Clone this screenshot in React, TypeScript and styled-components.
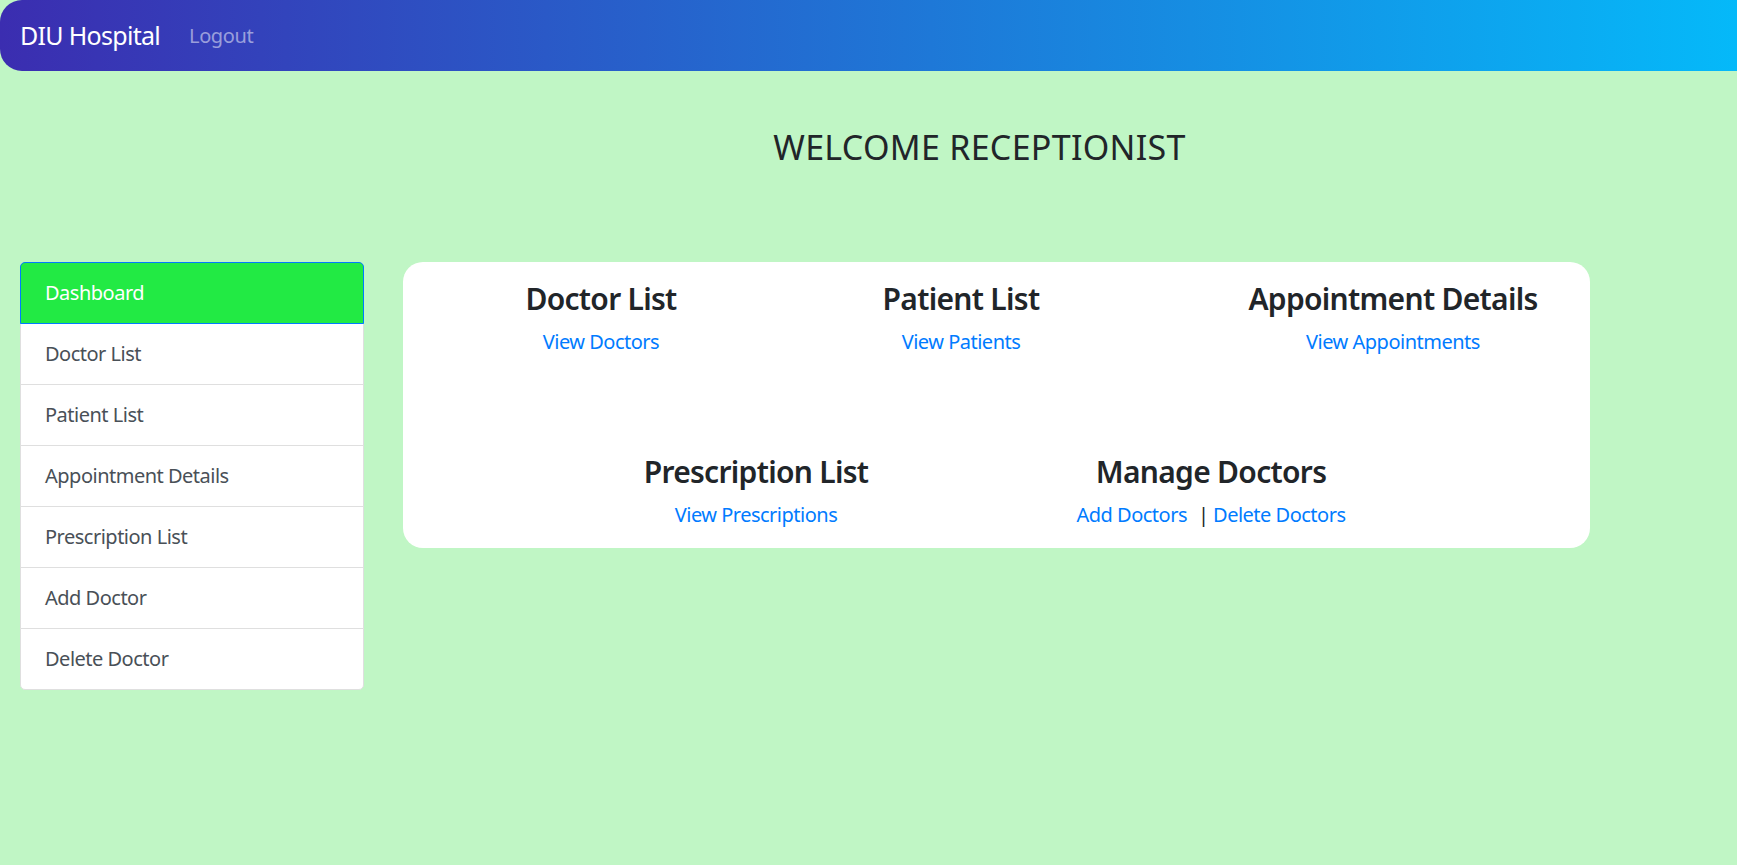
import styled, { createGlobalStyle } from 'styled-components';

const GlobalStyle = createGlobalStyle`
  html, body {
    margin: 0;
    padding: 0;
  }
  body {
    background-color: #c0f6c5;
    color: #212529;
    font-family: 'Noto Sans', 'Open Sans', sans-serif;
  }
`;

const Page = styled.div`
  background-color: #c0f6c5;
  min-height: 865px;
`;

const Navbar = styled.nav`
  align-items: center;
  background: linear-gradient(to right, #3b2db0, #05b9f9);
  border-radius: 22px 0 0 22px;
  display: flex;
  height: 71px;
  padding-left: 20px;
`;

const Brand = styled.a`
  color: #ffffff;
  font-size: 25px;
  letter-spacing: -0.7px;
  line-height: 1.5;
  text-decoration: none;
`;

const NavLink = styled.a`
  color: rgba(255, 255, 255, 0.5);
  font-size: 20px;
  letter-spacing: -0.4px;
  line-height: 1.5;
  margin-left: 29px;
  text-decoration: none;
`;

const Title = styled.h1`
  color: #212529;
  font-size: 34px;
  font-weight: 400;
  letter-spacing: 0.3px;
  line-height: 1.2;
  margin: 56px 0 0;
  padding-left: 222px;
  text-align: center;
`;

const Main = styled.main`
  align-items: flex-start;
  display: flex;
  gap: 39px;
  margin-top: 94px;
  padding: 0 20px;
`;

const Sidebar = styled.ul`
  display: flex;
  flex-direction: column;
  flex-shrink: 0;
  list-style: none;
  margin: 0;
  padding: 0;
  width: 344px;
`;

const SideItem = styled.li<{ $active?: boolean }>`
  background-color: ${props => (props.$active ? '#22ea44' : '#ffffff')};
  border: 1px solid ${props => (props.$active ? '#007bff' : '#dfdfdf')};
  color: ${props => (props.$active ? '#ffffff' : '#495057')};
  font-size: 20px;
  letter-spacing: -0.5px;
  line-height: 30px;
  margin-top: -1px;
  padding: 15px 25px 15px 24px;
  position: relative;
  z-index: ${props => (props.$active ? 1 : 0)};

  &:first-child {
    border-radius: 5px 5px 0 0;
    margin-top: 0;
  }
  &:last-child {
    border-radius: 0 0 5px 5px;
  }
`;

const Card = styled.section`
  background-color: #ffffff;
  border-radius: 20px;
  padding: 19px 0 18px;
  width: 1187px;
`;

const Row = styled.div<{ $indent: number; $top?: number }>`
  display: flex;
  margin-top: ${props => props.$top ?? 0}px;
  padding-left: ${props => props.$indent}px;
`;

const Cell = styled.div<{ $before?: number }>`
  margin-left: ${props => props.$before ?? 0}px;
  text-align: center;
  width: 300px;
`;

const CellTitle = styled.h4`
  color: #212529;
  font-size: 30px;
  font-weight: 600;
  letter-spacing: -0.7px;
  line-height: 1.2;
  margin: 0 0 10px;
  white-space: nowrap;
`;

const Links = styled.div`
  font-size: 20px;
  line-height: 30px;
  white-space: nowrap;
`;

const Link = styled.a`
  color: #007bff;
  letter-spacing: -0.5px;
  text-decoration: none;
`;

const Divider = styled.span`
  color: #212529;
  margin: 0 4px 0 11px;
`;

const menu = [
  'Dashboard',
  'Doctor List',
  'Patient List',
  'Appointment Details',
  'Prescription List',
  'Add Doctor',
  'Delete Doctor',
];

export default function App() {
  return (
    <Page>
      <GlobalStyle />
      <Navbar>
        <Brand href="#">DIU Hospital</Brand>
        <NavLink href="#">Logout</NavLink>
      </Navbar>
      <Title>WELCOME RECEPTIONIST</Title>
      <Main>
        <Sidebar>
          {menu.map((item, i) => (
            <SideItem key={item} $active={i === 0}>
              {item}
            </SideItem>
          ))}
        </Sidebar>
        <Card>
          <Row $indent={48}>
            <Cell>
              <CellTitle>Doctor List</CellTitle>
              <Links>
                <Link href="#">View Doctors</Link>
              </Links>
            </Cell>
            <Cell $before={60}>
              <CellTitle>Patient List</CellTitle>
              <Links>
                <Link href="#">View Patients</Link>
              </Links>
            </Cell>
            <Cell $before={132}>
              <CellTitle>Appointment Details</CellTitle>
              <Links>
                <Link href="#">View Appointments</Link>
              </Links>
            </Cell>
          </Row>
          <Row $indent={203} $top={97}>
            <Cell>
              <CellTitle>Prescription List</CellTitle>
              <Links>
                <Link href="#">View Prescriptions</Link>
              </Links>
            </Cell>
            <Cell $before={155}>
              <CellTitle>Manage Doctors</CellTitle>
              <Links>
                <Link href="#">Add Doctors</Link>
                <Divider>|</Divider>
                <Link href="#">Delete Doctors</Link>
              </Links>
            </Cell>
          </Row>
        </Card>
      </Main>
    </Page>
  );
}
